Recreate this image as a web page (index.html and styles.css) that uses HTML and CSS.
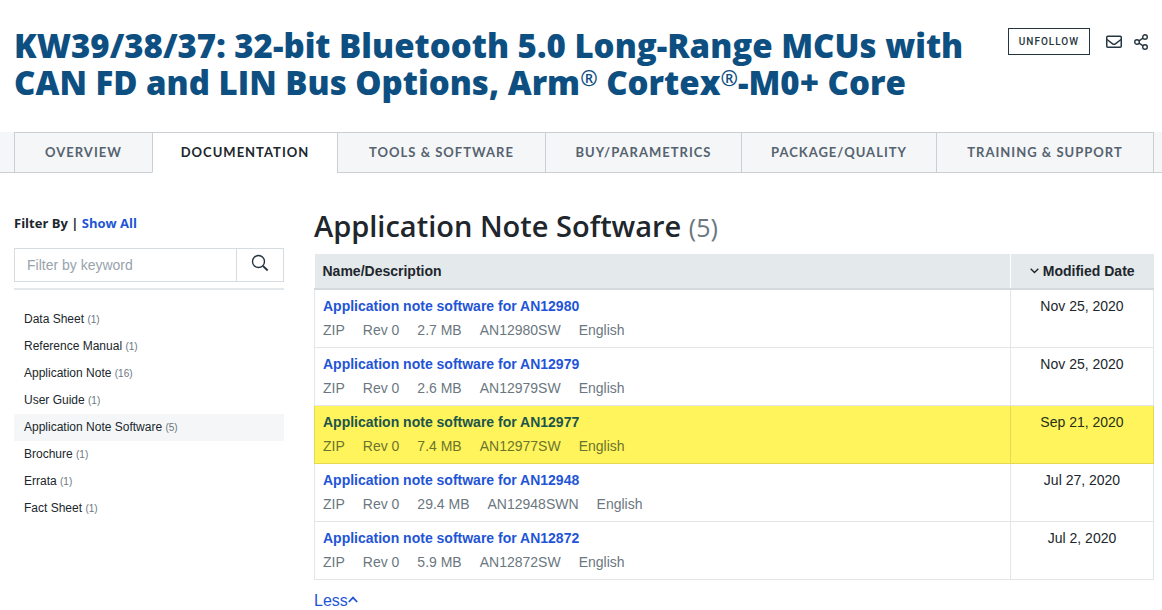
FILE: index.html
```html
<!DOCTYPE html>
<html lang="en">
<head>
<meta charset="utf-8">
<title>KW39/38/37 Documentation</title>
<link rel="stylesheet" href="styles.css">
</head>
<body>
<header class="product">
  <h1 class="product-title">KW39/38/37: 32-bit Bluetooth 5.0 Long-Range MCUs with<br>CAN FD and LIN Bus Options, Arm<sup>®</sup> Cortex<sup>®</sup>-M0+ Core</h1>
  <div class="product-actions">
    <button class="follow" type="button">UNFOLLOW</button>
    <button class="icon-button" type="button" aria-label="Email">
      <svg width="16" height="14" viewBox="0 0 16 14" fill="none" stroke="#263640" stroke-width="1.5"><rect x=".75" y="1.25" width="14.5" height="11" rx="1"/><path d="M1 4.5 6.6 8.8Q8 9.8 9.4 8.8L15 4.5"/></svg>
    </button>
    <button class="icon-button" type="button" aria-label="Share">
      <svg width="14" height="16" viewBox="0 0 14 16" fill="none" stroke="#263640" stroke-width="1.4"><circle cx="3" cy="8" r="2.3"/><circle cx="11" cy="3" r="2.3"/><circle cx="11" cy="13" r="2.3"/><path d="m5 6.8 4-2.6M5 9.2l4 2.6"/></svg>
    </button>
  </div>
</header>
<nav class="tabs">
  <a class="tab" href="#overview">OVERVIEW</a>
  <a class="tab tab-active" href="#documentation" aria-current="page">DOCUMENTATION</a>
  <a class="tab" href="#tools">TOOLS &amp; SOFTWARE</a>
  <a class="tab" href="#buy">BUY/PARAMETRICS</a>
  <a class="tab" href="#package">PACKAGE/QUALITY</a>
  <a class="tab" href="#training">TRAINING &amp; SUPPORT</a>
</nav>
<div class="content">
  <aside class="sidebar">
    <p class="filter-by">Filter By | <a href="#all">Show All</a></p>
    <form class="search">
      <input class="search-input" type="text" placeholder="Filter by keyword" aria-label="Filter by keyword">
      <button class="search-button" type="button" aria-label="Search">
        <svg width="18" height="18" viewBox="0 0 18 18" fill="none" stroke="#263640" stroke-width="1.4"><circle cx="7.5" cy="7.5" r="6"/><path d="m12 12 4.7 4.5" stroke-width="1.8"/></svg>
      </button>
    </form>
    <ul class="categories">
      <li><a class="category" href="#ds">Data Sheet <small>(1)</small></a></li>
      <li><a class="category" href="#rm">Reference Manual <small>(1)</small></a></li>
      <li><a class="category" href="#an">Application Note <small>(16)</small></a></li>
      <li><a class="category" href="#ug">User Guide <small>(1)</small></a></li>
      <li><a class="category category-active" href="#ans">Application Note Software <small>(5)</small></a></li>
      <li><a class="category" href="#br">Brochure <small>(1)</small></a></li>
      <li><a class="category" href="#er">Errata <small>(1)</small></a></li>
      <li><a class="category" href="#fs">Fact Sheet <small>(1)</small></a></li>
    </ul>
  </aside>
  <main class="results">
    <h2 class="results-title">Application Note Software <span class="results-count">(5)</span></h2>
    <table class="documents">
      <thead>
        <tr><th class="col-name">Name/Description</th><th class="col-date"><svg width="9" height="6" viewBox="0 0 9 6" fill="none" stroke="#20262c" stroke-width="1.4"><path d="m.7.8 3.8 3.8L8.3.8"/></svg> Modified Date</th></tr>
      </thead>
      <tbody>
        <tr><td><a class="doc-link" href="#12980">Application note software for AN12980</a><div class="doc-meta"><span>ZIP</span><span>Rev 0</span><span>2.7 MB</span><span>AN12980SW</span><span>English</span></div></td><td class="col-date">Nov 25, 2020</td></tr>
        <tr><td><a class="doc-link" href="#12979">Application note software for AN12979</a><div class="doc-meta"><span>ZIP</span><span>Rev 0</span><span>2.6 MB</span><span>AN12979SW</span><span>English</span></div></td><td class="col-date">Nov 25, 2020</td></tr>
        <tr class="marked"><td><a class="doc-link" href="#12977">Application note software for AN12977</a><div class="doc-meta"><span>ZIP</span><span>Rev 0</span><span>7.4 MB</span><span>AN12977SW</span><span>English</span></div></td><td class="col-date">Sep 21, 2020</td></tr>
        <tr><td><a class="doc-link" href="#12948">Application note software for AN12948</a><div class="doc-meta"><span>ZIP</span><span>Rev 0</span><span>29.4 MB</span><span>AN12948SWN</span><span>English</span></div></td><td class="col-date">Jul 27, 2020</td></tr>
        <tr><td><a class="doc-link" href="#12872">Application note software for AN12872</a><div class="doc-meta"><span>ZIP</span><span>Rev 0</span><span>5.9 MB</span><span>AN12872SW</span><span>English</span></div></td><td class="col-date">Jul 2, 2020</td></tr>
      </tbody>
    </table>
    <a class="less" href="#less">Less<svg width="10" height="7" viewBox="0 0 10 7" fill="none" stroke="#1f55d6" stroke-width="1.8"><path d="m.8 6 4.2-4.4L9.2 6"/></svg></a>
  </main>
</div>
</body>
</html>
```
FILE: styles.css
```css
* { box-sizing: border-box; }
body {
  margin: 0;
  background: #fff;
  color: #20262c;
  font: 14px/20px "Liberation Sans", Arial, sans-serif;
}
a { color: #1f55d6; text-decoration: none; }

.product {
  display: flex;
  justify-content: space-between;
  align-items: flex-start;
  padding: 27px 14px 31px;
}
.product-title {
  margin: 0;
  color: #0e4f82;
  font: 800 33px/37px "Open Sans", sans-serif;
  white-space: nowrap;
}
.product-title sup {
  font-size: 21px;
  font-weight: 600;
  line-height: 0;
  vertical-align: 9px;
}
.product-actions { display: flex; align-items: center; gap: 12px; padding-top: 1px; }
.follow {
  height: 27px;
  margin-right: 4px;
  padding: 0 10px;
  border: 1px solid #263640;
  background: #fff;
  color: #263640;
  font: 500 10px/14px Roboto, sans-serif;
  letter-spacing: 1px;
}
.icon-button { display: flex; padding: 0; border: 0; background: none; }

.tabs {
  display: grid;
  grid-template-columns: 138fr 185fr 208fr 196fr 195fr 218fr;
  padding: 0 8px 0 14px;
  background: #f4f6f8;
  box-shadow: inset 0 -1px #cbced2;
}
.tab {
  padding: 9px 0 10px;
  border: solid #cbced2;
  border-width: 1px 0 1px 1px;
  color: #56636f;
  font: 700 13px/20px Lato, sans-serif;
  text-align: center;
  letter-spacing: 1px;
}
.tab:last-child { border-right-width: 1px; }
.tab-active { border-bottom-color: #fff; background: #fff; color: #20262c; }

.content { display: flex; gap: 30px; padding: 35px 8px 0 14px; }
.sidebar { flex: 0 0 270px; padding-top: 5px; }
.filter-by { margin: 0 0 15px; font: 700 13px/20px "Open Sans", sans-serif; }
.search { display: flex; height: 34px; border: 1px solid #d6dbdf; }
.search-input {
  flex: 1;
  min-width: 0;
  padding: 0 12px;
  border: 0;
  font: 14px/20px "Liberation Sans", Arial, sans-serif;
}
.search-input::placeholder { color: #98a3ac; }
.search-button {
  width: 47px;
  padding: 0 0 4px;
  border: 0;
  border-left: 1px solid #d6dbdf;
  background: #fff;
}
.search-button svg { display: block; margin: 0 auto; }
.categories {
  margin: 6px 0 0;
  padding: 16px 0 0;
  border-top: 2px solid #e4e8eb;
  list-style: none;
}
.category { display: block; padding: 0 10px; color: #20262c; font-size: 12px; line-height: 27px; }
.category small { color: #6b7780; font-size: 10px; }
.category-active { background: #f4f6f8; }

.results { flex: 1; min-width: 0; }
.results-title { margin: 0 0 10px; font: 600 29px/36px "Open Sans", sans-serif; }
.results-count { color: #6b7780; font-weight: 400; font-size: 25px; line-height: 20px; }
.documents { width: 100%; border-collapse: collapse; }
.documents th {
  height: 35px;
  padding: 0 8px;
  border-bottom: 2px solid #d3d9dc;
  background: #e4e9eb;
  text-align: left;
}
.documents th svg { vertical-align: 2px; }
.documents th + th { border-left: 1px solid #fff; }
.documents td {
  height: 58px;
  padding: 6px 8px;
  border: 1px solid #e2e6e8;
  vertical-align: top;
}
.documents .col-date { width: 143px; text-align: center; }
.doc-link { display: block; font-weight: 700; }
.doc-meta { display: flex; gap: 18px; margin-top: 4px; color: #6b7780; }
.documents .marked td { border-color: #e4da4f; background: #fff45c; color: #26301b; }
.marked .doc-link { color: #1c544c; }
.documents .marked .doc-meta { color: #6b742c; }
.less { display: inline-block; margin-top: 11px; font-size: 16px; line-height: 20px; }
.less svg { vertical-align: 3px; }
```
